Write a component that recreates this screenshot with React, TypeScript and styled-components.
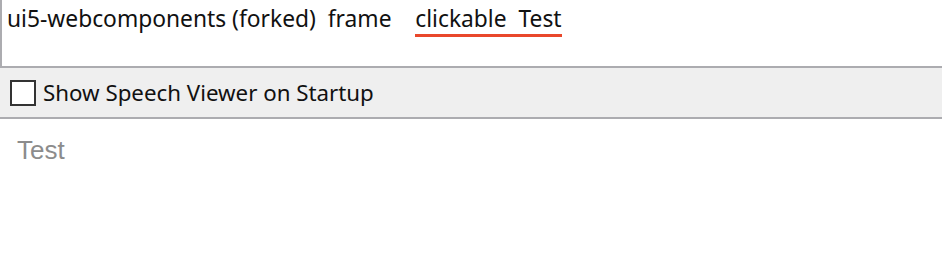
import React from 'react';
import styled, { createGlobalStyle } from 'styled-components';

const GlobalStyle = createGlobalStyle`
  html, body {
    margin: 0;
    padding: 0;
    background: #fff;
  }
`;

const Page = styled.div`
  width: 942px;
  height: 256px;
  display: flex;
  flex-direction: column;
  background: #fff;
  overflow: hidden;
`;

const Frame = styled.div`
  height: 66px;
  box-sizing: border-box;
  border-left: 2px solid #acacb0;
  padding: 3px 0 0 5px;
  display: flex;
  align-items: flex-start;
  font-family: 'Noto Sans', 'Open Sans', sans-serif;
  font-size: 22.8px;
  color: #111;
  white-space: pre;
`;

const Word = styled.span<{ underline?: boolean }>`
  display: inline-block;
  line-height: 28px;
  padding-top: 2px;
  padding-bottom: 1px;
  border-bottom: 3.5px solid ${(p) => (p.underline ? '#e9472b' : 'transparent')};
`;

const Toolbar = styled.div`
  height: 53px;
  box-sizing: border-box;
  border-top: 2px solid #acacb0;
  border-bottom: 2px solid #acacb0;
  background: #efefef;
  display: flex;
  align-items: center;
  padding-left: 10px;
  gap: 7px;
  font-family: 'Noto Sans', 'Open Sans', sans-serif;
  font-size: 22.3px;
  color: #111;
`;

const Checkbox = styled.span`
  width: 26px;
  height: 26px;
  box-sizing: border-box;
  border: 2px solid #333;
  background: #fff;
  flex: none;
`;

const Content = styled.div`
  padding: 16px 17px;
  font-family: 'Liberation Sans', Arial, sans-serif;
  font-size: 26px;
  color: #8c8c8c;
`;

export default function App() {
  return (
    <>
      <GlobalStyle />
      <Page>
        <Frame>
          <Word>ui5-webcomponents (forked)  frame    </Word>
          <Word underline>clickable  Test</Word>
        </Frame>
        <Toolbar>
          <Checkbox />
          <span>Show Speech Viewer on Startup</span>
        </Toolbar>
        <Content>Test</Content>
      </Page>
    </>
  );
}
